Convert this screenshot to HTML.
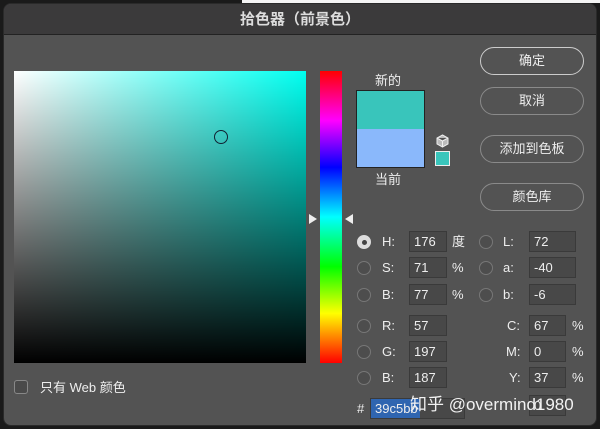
<!DOCTYPE html>
<html><head><meta charset="utf-8"><style>
*{margin:0;padding:0;box-sizing:border-box}
body{width:600px;height:429px;background:#1a1a1a;position:relative;overflow:hidden;font-family:"Liberation Sans","Noto Sans CJK SC",sans-serif;color:#e6e6e6}
.win{position:absolute;left:3px;top:3px;width:594px;height:423px;background:#535353;border-radius:8px;border:1px solid #2a2a2a;overflow:hidden}
.title{position:absolute;left:0;top:0;right:0;height:31px;background:#3b3a3b;border-bottom:1px solid #222;text-align:center;font-size:15px;line-height:31px;font-weight:bold;color:#ddd}
.a{position:absolute}
.sq{left:14px;top:71px;width:292px;height:292px;background:linear-gradient(to bottom,rgba(0,0,0,0),#000),linear-gradient(to right,#fff,rgba(255,255,255,0)),#00fff0}
.hue{left:320px;top:71px;width:22px;height:292px;background:linear-gradient(to bottom,#f00 0%,#f0f 17%,#00f 33%,#0ff 50%,#0f0 67%,#ff0 83%,#f00 100%)}
.btn{position:absolute;left:480px;width:104px;height:28px;border:1px solid #8a8a8a;border-radius:14px;text-align:center;line-height:26px;font-size:13px;color:#eee}
.btn.d{border:1.5px solid #ccc}
.in{position:absolute;height:21px;background:#484848;border:1px solid #3a3a3a;font-size:13px;line-height:19px;padding-left:4px;color:#eee}
.rad{position:absolute;width:14px;height:14px;border-radius:50%;border:1px solid #777;background:#4d4d4d}
.lb{position:absolute;font-size:13px;color:#eee;line-height:21px}
</style></head><body>
<div class="a" style="left:242px;top:0;width:358px;height:3px;background:#f4f4f4"></div>
<div class="win">
<div class="title">拾色器（前景色）</div>
</div>
<div class="a sq"></div>
<div class="a" style="left:214px;top:130px;width:14px;height:14px;border:1.5px solid #123;border-radius:50%"></div>
<div class="a hue"></div>
<div class="a" style="left:309px;top:214px;width:0;height:0;border-top:5px solid transparent;border-bottom:5px solid transparent;border-left:8px solid #eee"></div>
<div class="a" style="left:345px;top:214px;width:0;height:0;border-top:5px solid transparent;border-bottom:5px solid transparent;border-right:8px solid #eee"></div>
<div class="lb" style="left:375px;top:70px">新的</div>
<div class="a" style="left:356px;top:90px;width:69px;height:39px;background:#39c5bb;border:1px solid #222;border-bottom:none"></div>
<div class="a" style="left:356px;top:129px;width:69px;height:39px;background:#8ab8fb;border:1px solid #222;border-top:none"></div>
<div class="lb" style="left:375px;top:169px">当前</div>
<svg class="a" style="left:436px;top:134px" width="13" height="14" viewBox="0 0 13 14"><path d="M6.5 1L12 4v6L6.5 13 1 10V4z M1 4l5.5 3L12 4 M6.5 7v6" fill="#bbb" stroke="#eee" stroke-width="1"/></svg>
<div class="a" style="left:435px;top:151px;width:15px;height:15px;background:#39c5bb;border:1.5px solid #eee"></div>
<div class="btn d" style="top:47px">确定</div>
<div class="btn" style="top:87px">取消</div>
<div class="btn" style="top:135px">添加到色板</div>
<div class="btn" style="top:183px">颜色库</div>

<div class="rad" style="left:357px;top:235px;background:#ddd;border-color:#ddd"></div><div class="a" style="left:362px;top:240px;width:5px;height:5px;border-radius:50%;background:#444"></div>
<div class="rad" style="left:357px;top:261px"></div>
<div class="rad" style="left:357px;top:288px"></div>
<div class="rad" style="left:357px;top:319px"></div>
<div class="rad" style="left:357px;top:345px"></div>
<div class="rad" style="left:357px;top:371px"></div>
<div class="rad" style="left:479px;top:235px"></div>
<div class="rad" style="left:479px;top:261px"></div>
<div class="rad" style="left:479px;top:288px"></div>

<div class="lb" style="left:382px;top:231px">H:</div><div class="in" style="left:409px;top:231px;width:38px">176</div><div class="lb" style="left:452px;top:231px">度</div>
<div class="lb" style="left:382px;top:257px">S:</div><div class="in" style="left:409px;top:257px;width:38px">71</div><div class="lb" style="left:452px;top:257px">%</div>
<div class="lb" style="left:382px;top:284px">B:</div><div class="in" style="left:409px;top:284px;width:38px">77</div><div class="lb" style="left:452px;top:284px">%</div>
<div class="lb" style="left:382px;top:315px">R:</div><div class="in" style="left:409px;top:315px;width:38px">57</div>
<div class="lb" style="left:382px;top:341px">G:</div><div class="in" style="left:409px;top:341px;width:38px">197</div>
<div class="lb" style="left:382px;top:367px">B:</div><div class="in" style="left:409px;top:367px;width:38px">187</div>

<div class="lb" style="left:503px;top:231px">L:</div><div class="in" style="left:529px;top:231px;width:47px">72</div>
<div class="lb" style="left:503px;top:257px">a:</div><div class="in" style="left:529px;top:257px;width:47px">-40</div>
<div class="lb" style="left:503px;top:284px">b:</div><div class="in" style="left:529px;top:284px;width:47px">-6</div>

<div class="lb" style="left:507px;top:315px">C:</div><div class="in" style="left:529px;top:315px;width:37px">67</div><div class="lb" style="left:572px;top:315px">%</div>
<div class="lb" style="left:506px;top:341px">M:</div><div class="in" style="left:529px;top:341px;width:37px">0</div><div class="lb" style="left:572px;top:341px">%</div>
<div class="lb" style="left:509px;top:367px">Y:</div><div class="in" style="left:529px;top:367px;width:37px">37</div><div class="lb" style="left:572px;top:367px">%</div>
<div class="in" style="left:529px;top:395px;width:37px">0</div>

<div class="lb" style="left:357px;top:398px">#</div>
<div class="in" style="left:370px;top:398px;width:95px;padding-left:0"><span style="background:#2f65b0;display:inline-block;height:19px;padding:0 2px 0 4px">39c5bb</span></div>
<div class="a" style="left:410px;top:393px;font-size:17px;color:#f2f2f2;white-space:nowrap;line-height:24px">知乎 @overmind1980</div>

<div class="a" style="left:14px;top:380px;width:14px;height:14px;border:1px solid #888;border-radius:3px;background:#4a4a4a"></div>
<div class="lb" style="left:40px;top:377px">只有 Web 颜色</div>
</body></html>
